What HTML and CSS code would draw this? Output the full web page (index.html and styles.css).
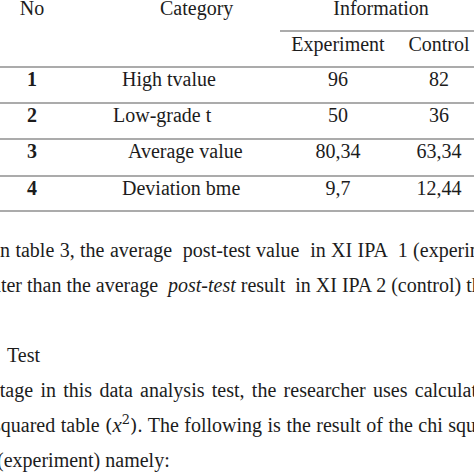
FILE: index.html
```html
<!DOCTYPE html>
<html>
<head>
<meta charset="utf-8">
<link rel="stylesheet" href="styles.css">
</head>
<body>
<div class="doc">
  <div class="thead">
    <div class="th no">No</div>
    <div class="th cat">Category</div>
    <div class="th info">Information</div>
    <div class="th sub exp">Experiment</div>
    <div class="th sub ctl">Control</div>
  </div>
  <div class="row h36">
    <div class="cell num">1</div>
    <div class="cell cat i58">High tvalue</div>
    <div class="cell val">96</div>
    <div class="cell val">82</div>
  </div>
  <div class="row h36">
    <div class="cell num">2</div>
    <div class="cell cat i49">Low-grade t</div>
    <div class="cell val">50</div>
    <div class="cell val">36</div>
  </div>
  <div class="row h37">
    <div class="cell num">3</div>
    <div class="cell cat i64">Average value</div>
    <div class="cell val">80,34</div>
    <div class="cell val">63,34</div>
  </div>
  <div class="row h35">
    <div class="cell num">4</div>
    <div class="cell cat i58">Deviation bme</div>
    <div class="cell val">9,7</div>
    <div class="cell val">12,44</div>
  </div>

  <div class="text">
    <div class="line l1">on table 3, the average  post-test value  in XI IPA  1 (experiment)</div>
    <div class="line l2">ater than the average  <i>post-test</i> result  in XI IPA 2 (control) that</div>
    <div class="line blank">&nbsp;</div>
    <div class="line l4">Test</div>
    <div class="line l5">stage in this data analysis test, the researcher uses calculation</div>
    <div class="line l6">squared table <span class="math">(<i>x</i><sup>2</sup>)</span>. The following is the result of the chi square</div>
    <div class="line l7">(experiment) namely:</div>
  </div>
</div>
</body>
</html>
```

FILE: styles.css
```css
html, body {
  margin: 0;
  padding: 0;
  background: #ffffff;
  overflow: hidden;
}
body {
  width: 474px;
  height: 474px;
  font-family: "Liberation Serif", "Times New Roman", serif;
  font-size: 20px;
  line-height: 20px;
  color: #1c1c1c;
}
.doc {
  width: 482px;
}
.thead {
  display: grid;
  grid-template-columns: 64px 216px 116px 86px;
  grid-template-rows: 32px 34px;
  border-bottom: 2px solid #ababab;
}
.th {
  font-weight: normal;
  line-height: 16px;
}
.no {
  grid-row: 1 / 3;
  grid-column: 1;
  text-align: center;
}
.th.cat {
  grid-row: 1 / 3;
  grid-column: 2;
  padding-left: 96px;
}
.info {
  grid-row: 1;
  grid-column: 3 / 5;
  text-align: center;
  border-bottom: 2px solid #ababab;
}
.sub {
  grid-row: 2;
  line-height: 20px;
  padding-top: 2px;
  text-align: center;
}
.exp { grid-column: 3; }
.ctl { grid-column: 4; }

.row {
  display: grid;
  grid-template-columns: 64px 216px 116px 86px;
  border-bottom: 2px solid #ababab;
  box-sizing: border-box;
}
.h35 { height: 35px; }
.h36 { height: 36px; }
.h37 { height: 37px; }
.cell {
  padding-top: 1px;
}
.num {
  text-align: center;
  font-weight: bold;
}
.val {
  text-align: center;
}
.i49 { padding-left: 49px; }
.i58 { padding-left: 58px; }
.i64 { padding-left: 64px; }

.text {
  margin-top: 21px;
  line-height: 35px;
}
.line {
  white-space: pre;
}
.l1 { margin-left: -10px; word-spacing: 0.4px; }
.l2 { margin-left: -8px; }
.l4 { margin-left: 7px; }
.l5 { margin-left: -8px; word-spacing: 2.3px; }
.l6 { margin-left: -7px; word-spacing: 0.5px; }
.l7 { margin-left: -3px; }
.math {
  font-family: "DejaVu Serif", "Liberation Serif", serif;
  font-size: 19px;
}
.math i {
  font-family: "Liberation Serif", serif;
  font-size: 21px;
}
.math sup {
  font-size: 13px;
  line-height: 0;
  vertical-align: 8px;
}
```
